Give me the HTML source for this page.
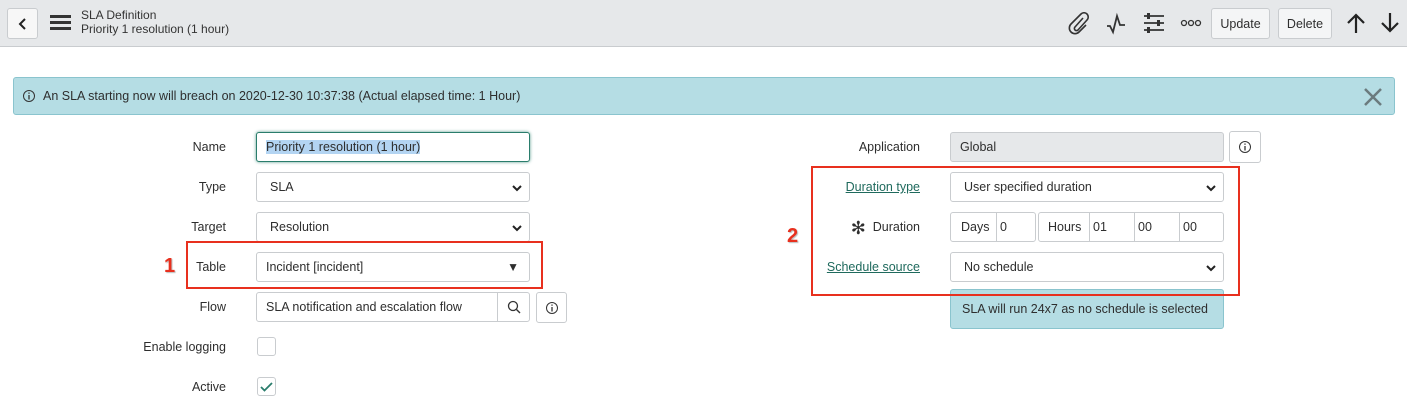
<!DOCTYPE html><html><head><meta charset="utf-8"><style>
*{box-sizing:border-box;margin:0;padding:0}
body{width:1407px;height:412px;background:#fff;font-family:"Liberation Sans",sans-serif;font-size:12.5px;color:#2e2e2e;position:relative;overflow:hidden}
.a{position:absolute}
.hdr{left:0;top:0;width:1407px;height:47px;background:#e6e8ea;border-bottom:1px solid #c9cccf}
.btn{background:#f4f5f6;border:1px solid #c9cccf;border-radius:3px;display:flex;align-items:center;justify-content:center}
.lbl{text-align:right;width:200px;line-height:30px}
.in{border:1px solid #c9cccf;border-radius:3px;height:30px;line-height:28px;padding-left:13px;background:#fff}
.chev{position:absolute;right:6px;top:9px}
.red{border:2px solid #e8301e}
.num{color:#e8301e;font-weight:bold;font-size:20px;text-shadow:1px 1px 1px #bbb}
a{color:#1f6a5d;text-decoration:underline}
</style></head><body>
<div class="a hdr"></div>
<div class="a btn" style="left:7px;top:8px;width:31px;height:31px;background:#f7f7f7"><svg width="12" height="14"><path d="M8 2L3 7l5 5" stroke="#222" stroke-width="2" fill="none"/></svg></div>
<div class="a" style="left:50px;top:15px;width:21px;height:3px;background:#333;box-shadow:0 6px 0 #333,0 12px 0 #333"></div>
<div class="a" style="left:81px;top:8px;font-size:12px;line-height:14px;color:#333">SLA Definition<br>Priority 1 resolution (1 hour)</div>
<svg class="a" style="left:1067px;top:12px" width="24" height="24" viewBox="0 0 24 24"><path d="M16 6l-8 9a2 2 0 0 0 3 3l9-10a4 4 0 0 0-6-6L4 12a5.5 5.5 0 0 0 8 8l7-7" stroke="#333" stroke-width="1.6" fill="none"/></svg>
<svg class="a" style="left:1105px;top:12px" width="24" height="24"><path d="M2 14h3l3 6 4-16 3 9h5" stroke="#333" stroke-width="1.8" fill="none"/></svg>
<svg class="a" style="left:1143px;top:12px" width="22" height="22"><path d="M1 4h20M1 11h20M1 18h20" stroke="#333" stroke-width="1.8"/><rect x="4" y="1" width="3" height="6" fill="#333"/><rect x="14" y="8" width="3" height="6" fill="#333"/><rect x="4" y="15" width="3" height="6" fill="#333"/></svg>
<svg class="a" style="left:1180px;top:19px" width="22" height="8"><circle cx="4" cy="4" r="2.5" stroke="#333" fill="none" stroke-width="1.3"/><circle cx="11" cy="4" r="2.5" stroke="#333" fill="none" stroke-width="1.3"/><circle cx="18" cy="4" r="2.5" stroke="#333" fill="none" stroke-width="1.3"/></svg>
<div class="a btn" style="left:1211px;top:8px;width:59px;height:31px">Update</div>
<div class="a btn" style="left:1278px;top:8px;width:54px;height:31px">Delete</div>
<svg class="a" style="left:1345px;top:12px" width="22" height="22"><path d="M11 21V3M3 11l8-8 8 8" stroke="#222" stroke-width="2.2" fill="none"/></svg>
<svg class="a" style="left:1379px;top:12px" width="22" height="22"><path d="M11 1v18M3 11l8 8 8-8" stroke="#222" stroke-width="2.2" fill="none"/></svg>

<div class="a" style="left:13px;top:77px;width:1382px;height:38px;background:#b5dde4;border:1px solid #8ac4ce;border-radius:3px;line-height:36px;padding-left:29px;font-size:12.5px">An SLA starting now will breach on 2020-12-30 10:37:38 (Actual elapsed time: 1 Hour)</div>
<svg class="a" style="left:22px;top:89px" width="14" height="14"><circle cx="7" cy="7" r="5.5" stroke="#333" fill="none"/><path d="M7 6v4.5M7 3.5v1.2" stroke="#333" stroke-width="1.3"/></svg>
<svg class="a" style="left:1363px;top:87px" width="20" height="20"><path d="M2 2l16 16M18 2L2 18" stroke="#6b7b7e" stroke-width="2.5"/></svg>

<div class="a lbl" style="left:26px;top:132px">Name</div>
<div class="a lbl" style="left:26px;top:172px">Type</div>
<div class="a lbl" style="left:26px;top:212px">Target</div>
<div class="a lbl" style="left:26px;top:252px">Table</div>
<div class="a lbl" style="left:26px;top:292px">Flow</div>
<div class="a lbl" style="left:26px;top:332px">Enable logging</div>
<div class="a lbl" style="left:26px;top:372px">Active</div>

<div class="a in" style="left:256px;top:132px;width:274px;border-color:#2a7d6c;box-shadow:0 0 3px #5a9c8e;padding-left:9px"><span style="background:#b3d4f2">Priority 1 resolution (1 hour)</span></div>
<div class="a in" style="left:256px;top:172px;width:274px">SLA<svg class="chev" width="12" height="12"><path d="M2 4l4 4 4-4" stroke="#222" stroke-width="2" fill="none"/></svg></div>
<div class="a in" style="left:256px;top:212px;width:274px">Resolution<svg class="chev" width="12" height="12"><path d="M2 4l4 4 4-4" stroke="#222" stroke-width="2" fill="none"/></svg></div>
<div class="a in" style="left:256px;top:252px;width:274px;padding-left:9px">Incident [incident]<span style="position:absolute;right:10px;font-size:12px">▼</span></div>
<div class="a in" style="left:256px;top:292px;width:274px;padding-left:9px">SLA notification and escalation flow</div>
<div class="a" style="left:497px;top:292px;width:33px;height:30px;border-left:1px solid #c9cccf;display:flex;align-items:center;justify-content:center"><svg width="14" height="14"><circle cx="6" cy="6" r="4.5" stroke="#333" fill="none" stroke-width="1.3"/><path d="M9.5 9.5l3.5 3.5" stroke="#333" stroke-width="1.4"/></svg></div>
<div class="a btn" style="left:536px;top:292px;width:31px;height:31px;background:#fff"><svg width="14" height="14"><circle cx="7" cy="7" r="5.5" stroke="#333" fill="none"/><path d="M7 6v4.5M7 3.5v1.2" stroke="#333" stroke-width="1.3"/></svg></div>
<div class="a" style="left:257px;top:337px;width:19px;height:19px;border:1px solid #c9cccf;border-radius:3px"></div>
<div class="a" style="left:257px;top:377px;width:19px;height:19px;border:1px solid #c9cccf;border-radius:3px"><svg width="17" height="17"><path d="M3 9l3.5 3.5L14 5" stroke="#2a7d6c" stroke-width="1.8" fill="none"/></svg></div>
<div class="a red" style="left:186px;top:241px;width:357px;height:48px"></div>
<div class="a num" style="left:164px;top:255px">1</div>

<div class="a lbl" style="left:720px;top:132px">Application</div>
<div class="a lbl" style="left:720px;top:172px"><a>Duration type</a></div>
<div class="a lbl" style="left:720px;top:212px"><span style="font-size:18px;vertical-align:-3px">✻</span>&nbsp; Duration</div>
<div class="a lbl" style="left:720px;top:252px"><a>Schedule source</a></div>
<div class="a in" style="left:950px;top:132px;width:274px;background:#e6e8ea;padding-left:9px">Global</div>
<div class="a btn" style="left:1229px;top:131px;width:32px;height:32px;background:#fff"><svg width="14" height="14"><circle cx="7" cy="7" r="5.5" stroke="#333" fill="none"/><path d="M7 6v4.5M7 3.5v1.2" stroke="#333" stroke-width="1.3"/></svg></div>
<div class="a in" style="left:950px;top:172px;width:274px">User specified duration<svg class="chev" width="12" height="12"><path d="M2 4l4 4 4-4" stroke="#222" stroke-width="2" fill="none"/></svg></div>
<div class="a in" style="left:950px;top:212px;width:86px;padding-left:10px">Days</div>
<div class="a" style="left:996px;top:212px;width:1px;height:30px;background:#c9cccf"></div>
<div class="a" style="left:1000px;top:212px;line-height:30px">0</div>
<div class="a in" style="left:1038px;top:212px;width:186px;padding-left:9px">Hours</div>
<div class="a" style="left:1089px;top:212px;width:1px;height:30px;background:#c9cccf"></div>
<div class="a" style="left:1134px;top:212px;width:1px;height:30px;background:#c9cccf"></div>
<div class="a" style="left:1179px;top:212px;width:1px;height:30px;background:#c9cccf"></div>
<div class="a" style="left:1093px;top:212px;line-height:30px">01</div>
<div class="a" style="left:1138px;top:212px;line-height:30px">00</div>
<div class="a" style="left:1183px;top:212px;line-height:30px">00</div>
<div class="a in" style="left:950px;top:252px;width:274px">No schedule<svg class="chev" width="12" height="12"><path d="M2 4l4 4 4-4" stroke="#222" stroke-width="2" fill="none"/></svg></div>
<div class="a" style="left:950px;top:289px;width:274px;height:40px;background:#b5dde4;border:1px solid #8ac4ce;border-radius:3px;line-height:38px;padding-left:11px">SLA will run 24x7 as no schedule is selected</div>
<div class="a red" style="left:811px;top:166px;width:429px;height:130px"></div>
<div class="a num" style="left:787px;top:225px">2</div>
</body></html>
